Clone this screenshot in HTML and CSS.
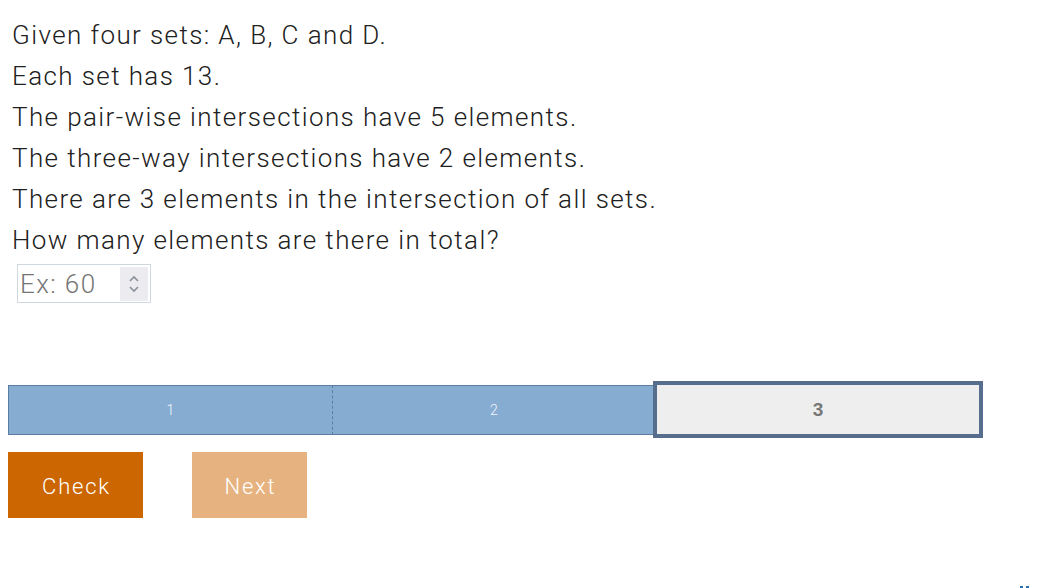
FILE: index.html
```html
<!DOCTYPE html>
<html>
<head>
<meta charset="utf-8">
<link rel="stylesheet" href="styles.css">
</head>
<body>
<div class="page">
  <div class="question">
    <p>Given four sets: A, B, C and D.</p>
    <p>Each set has 13.</p>
    <p>The pair-wise intersections have 5 elements.</p>
    <p>The three-way intersections have 2 elements.</p>
    <p>There are 3 elements in the intersection of all sets.</p>
    <p>How many elements are there in total?</p>
  </div>
  <div class="answer">
    <span class="placeholder">Ex: 60</span>
    <span class="spinner">
      <svg width="14" height="24" viewBox="0 0 14 24"><path d="M3 9 L7 5 L11 9" fill="none" stroke="#8a8f99" stroke-width="1.6"/><path d="M3 15 L7 19 L11 15" fill="none" stroke="#8a8f99" stroke-width="1.6"/></svg>
    </span>
  </div>
  <div class="progress">
    <div class="seg seg-done first">1</div>
    <div class="seg seg-done second">2</div>
    <div class="seg seg-current">3</div>
  </div>
  <div class="buttons">
    <button class="btn btn-check">Check</button>
    <button class="btn btn-next">Next</button>
  </div>
</div>
<div class="corner-dots"><span></span><span></span></div>
</body>
</html>
```
FILE: styles.css
```css
html, body {
  margin: 0;
  padding: 0;
  background: #ffffff;
}
body {
  font-family: Roboto, "Noto Sans", sans-serif;
  color: #222;
}
.page {
  padding: 15px 8px 0 8px;
}
.question {
  padding-left: 4px;
}
.question p {
  margin: 0;
  font-size: 26px;
  font-weight: 300;
  line-height: 41px;
  letter-spacing: 1.4px;
  color: #202020;
}
.answer {
  margin: 3px 0 0 9px;
  width: 132px;
  height: 37px;
  border: 1px solid #cfd8dd;
  display: flex;
  align-items: center;
  justify-content: space-between;
  box-sizing: content-box;
}
.placeholder {
  font-size: 26px;
  font-weight: 300;
  letter-spacing: 1.4px;
  color: #757575;
  padding-left: 2px;
}
.spinner {
  width: 28px;
  height: 34px;
  margin-right: 2px;
  background: #ebebf0;
  display: flex;
  align-items: center;
  justify-content: center;
}
.progress {
  margin-top: 78px;
  display: flex;
  align-items: center;
  height: 57px;
}
.seg {
  box-sizing: border-box;
  display: flex;
  align-items: center;
  justify-content: center;
}
.seg-done {
  height: 50px;
  background: #87acd2;
  color: #f2f6fb;
  font-size: 14px;
  font-weight: 300;
  border-top: 1px solid #5b7da3;
  border-bottom: 1px solid #5b7da3;
}
.first {
  width: 324px;
  border-left: 1px solid #5b7da3;
}
.second {
  width: 323px;
  border-left: 1px dashed #5b7da3;
}
.seg-current {
  width: 330px;
  height: 57px;
  margin-left: -2px;
  background: #eeeeee;
  border: 4px solid #566d8e;
  font-family: "Liberation Sans", Arial, sans-serif;
  font-weight: bold;
  font-size: 19px;
  color: #777777;
}
.buttons {
  margin-top: 14px;
  display: flex;
  gap: 49px;
}
.btn {
  border: none;
  height: 66px;
  color: #ffffff;
  font-family: Roboto, "Noto Sans", sans-serif;
  font-weight: 300;
  font-size: 22px;
  letter-spacing: 1.8px;
  padding: 3px 0 0 2px;
}
.btn-check {
  width: 135px;
  background: #cc6600;
}
.btn-next {
  width: 115px;
  background: #e6b380;
}
.corner-dots {
  position: absolute;
  left: 1020px;
  top: 586px;
  display: flex;
  gap: 3px;
}
.corner-dots span {
  width: 3px;
  height: 2px;
  background: #2a6fb5;
}
```
